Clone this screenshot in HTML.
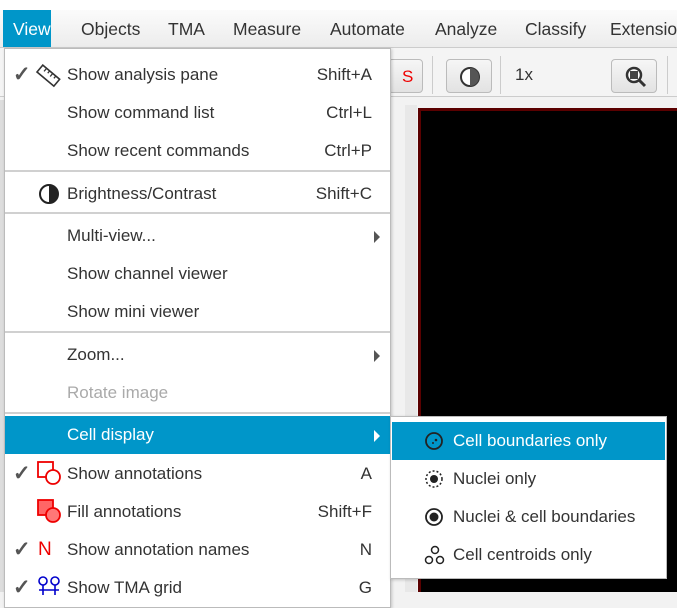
<!DOCTYPE html>
<html><head><meta charset="utf-8"><style>
*{margin:0;padding:0;box-sizing:border-box}
body{width:677px;height:592px;overflow:hidden;background:#f2f2f2;font-family:"Liberation Sans",sans-serif;position:relative;font-size:17px;color:#333}
.abs{position:absolute}
.mb{top:10px;left:0;width:677px;height:38px;background:linear-gradient(#fbfbfb,#ececec);border-bottom:1px solid #ccc}
.mb span{position:absolute;top:9px;font-size:17.5px;color:#333}
.tb{top:48px;left:0;width:677px;height:49px;background:#f4f4f4;border-bottom:1px solid #ccc}
.btn{position:absolute;top:11px;height:34px;border:1px solid #bbb;border-radius:4px;background:linear-gradient(#f6f6f6,#e2e2e2)}
.menu{left:4px;top:48px;width:387px;height:560px;background:#fff;border:1px solid #bbb;box-shadow:1px 1px 3px rgba(0,0,0,.2)}
.it{position:absolute;left:0;width:385px;height:38px}
.it .t{position:absolute;left:62px;top:9px}
.it .k{position:absolute;right:18px;top:9px}
.sep{position:absolute;left:0;width:385px;height:2px;background:#d0d0d0}
.chk{position:absolute;left:8px;top:6px;font-size:21px;color:#555;font-weight:bold}
.arr{position:absolute;right:10px;top:14px;width:0;height:0;border-left:6px solid #555;border-top:6px solid transparent;border-bottom:6px solid transparent}
.hl{background:#0096c9;color:#fff}
.sub{left:390px;top:416px;width:277px;height:163px;background:#fff;border:1px solid #bbb;box-shadow:1px 1px 3px rgba(0,0,0,.2)}
.si{position:absolute;left:1px;width:273px;height:38px}
.si .t{position:absolute;left:61px;top:9px}
.si svg{position:absolute;left:32px;top:9px}
</style></head><body>
<div class="abs" style="top:0;left:0;width:677px;height:10px;background:#fff"></div>
<div class="abs mb">
<div class="abs" style="left:3px;top:0;width:48px;height:37px;background:#0096c9"></div>
<span style="left:13px;color:#fff">View</span>
<span style="left:81px">Objects</span>
<span style="left:168px">TMA</span>
<span style="left:233px">Measure</span>
<span style="left:330px">Automate</span>
<span style="left:435px">Analyze</span>
<span style="left:525px">Classify</span>
<span style="left:610px">Extensions</span>
</div>
<div class="abs tb">
<div class="btn" style="left:388px;width:35px"><span style="position:absolute;left:13px;top:7px;color:#e00">S</span></div>
<div class="abs" style="left:432px;top:8px;width:1px;height:38px;background:#ccc"></div>
<div class="btn" style="left:446px;width:46px"><svg style="position:absolute;left:12px;top:6px" width="22" height="22"><circle cx="11" cy="11" r="9" fill="#fff" stroke="#333" stroke-width="2"/><path d="M11 2a9 9 0 0 1 0 18z" fill="#555"/></svg></div>
<div class="abs" style="left:500px;top:8px;width:1px;height:38px;background:#ccc"></div>
<span class="abs" style="left:515px;top:17px">1x</span>
<div class="btn" style="left:611px;width:46px"><svg style="position:absolute;left:12px;top:5px" width="24" height="24"><circle cx="10" cy="10" r="7" fill="#fff" stroke="#333" stroke-width="2.5"/><rect x="6" y="6" width="8" height="8" fill="#444"/><path d="M15 15l6 6" stroke="#333" stroke-width="3"/></svg></div>
<div class="abs" style="left:667px;top:8px;width:1px;height:38px;background:#ccc"></div>
</div>
<div class="abs" style="left:405px;top:105px;width:12px;height:487px;background:#e8e8e8"></div>
<div class="abs" style="left:418px;top:108px;width:259px;height:484px;background:#000;border-left:3px solid #5a0000;border-top:3px solid #5a0000"></div>
<div class="abs" style="left:0;top:100px;width:4px;height:492px;background:#ddd"></div>

<div class="abs menu">
<div class="it" style="top:7px"><span class="chk">✓</span><svg style="position:absolute;left:30px;top:8px" width="26" height="24"><g transform="rotate(40 13 12)"><rect x="2" y="7" width="22" height="9" fill="#fff" stroke="#333" stroke-width="1.6"/><path d="M7 7v4M11 7v3M15 7v4M19 7v3" stroke="#333" stroke-width="1.3"/></g></svg><span class="t">Show analysis pane</span><span class="k">Shift+A</span></div>
<div class="it" style="top:45px"><span class="t">Show command list</span><span class="k">Ctrl+L</span></div>
<div class="it" style="top:83px"><span class="t">Show recent commands</span><span class="k">Ctrl+P</span></div>
<div class="sep" style="top:121px"></div>
<div class="it" style="top:126px"><svg style="position:absolute;left:33px;top:8px" width="22" height="22"><circle cx="11" cy="11" r="9" fill="#fff" stroke="#222" stroke-width="2"/><path d="M11 2a9 9 0 0 1 0 18z" fill="#222"/></svg><span class="t">Brightness/Contrast</span><span class="k">Shift+C</span></div>
<div class="sep" style="top:163px"></div>
<div class="it" style="top:168px"><span class="t">Multi-view...</span><span class="arr"></span></div>
<div class="it" style="top:206px"><span class="t">Show channel viewer</span></div>
<div class="it" style="top:244px"><span class="t">Show mini viewer</span></div>
<div class="sep" style="top:282px"></div>
<div class="it" style="top:287px"><span class="t">Zoom...</span><span class="arr"></span></div>
<div class="it" style="top:325px;color:#aaa"><span class="t">Rotate image</span></div>
<div class="sep" style="top:363px"></div>
<div class="it hl" style="top:367px"><span class="t">Cell display</span><span class="arr" style="border-left-color:#fff"></span></div>
<div class="it" style="top:406px"><span class="chk">✓</span><svg style="position:absolute;left:31px;top:5px" width="26" height="28"><rect x="2" y="2" width="15" height="15" fill="none" stroke="#e00" stroke-width="1.8"/><circle cx="17" cy="17" r="7" fill="#fff" stroke="#e00" stroke-width="1.8"/></svg><span class="t">Show annotations</span><span class="k">A</span></div>
<div class="it" style="top:444px"><svg style="position:absolute;left:31px;top:5px" width="26" height="28"><rect x="2" y="2" width="15" height="15" fill="#f66" stroke="#e00" stroke-width="1.8"/><circle cx="17" cy="17" r="7" fill="#f77" stroke="#e00" stroke-width="1.8"/></svg><span class="t">Fill annotations</span><span class="k">Shift+F</span></div>
<div class="it" style="top:482px"><span class="chk">✓</span><span style="position:absolute;left:33px;top:8px;color:#e00;font-size:19px">N</span><span class="t">Show annotation names</span><span class="k">N</span></div>
<div class="it" style="top:520px"><span class="chk">✓</span><svg style="position:absolute;left:32px;top:6px" width="26" height="26"><circle cx="6" cy="6" r="4" fill="none" stroke="#00c" stroke-width="1.6"/><circle cx="18" cy="6" r="4" fill="none" stroke="#00c" stroke-width="1.6"/><path d="M6 10v10M18 10v10M2 15h20" stroke="#00c" stroke-width="1.6"/></svg><span class="t">Show TMA grid</span><span class="k">G</span></div>
</div>

<div class="abs sub">
<div class="si hl" style="top:5px"><svg width="20" height="20"><circle cx="10" cy="10" r="8" fill="none" stroke="#222" stroke-width="1.8"/><circle cx="12" cy="9" r="1.3" fill="#222"/><circle cx="9" cy="12" r="1" fill="#222"/></svg><span class="t">Cell boundaries only</span></div>
<div class="si" style="top:43px"><svg width="20" height="20"><circle cx="10" cy="10" r="8" fill="none" stroke="#222" stroke-width="1.5" stroke-dasharray="2 2"/><circle cx="10" cy="10" r="4" fill="#222"/></svg><span class="t">Nuclei only</span></div>
<div class="si" style="top:81px"><svg width="20" height="20"><circle cx="10" cy="10" r="8" fill="none" stroke="#222" stroke-width="1.8"/><circle cx="10" cy="10" r="4.5" fill="#222"/></svg><span class="t">Nuclei &amp; cell boundaries</span></div>
<div class="si" style="top:119px"><svg width="22" height="22"><circle cx="11" cy="5" r="3.5" fill="none" stroke="#222" stroke-width="1.5"/><circle cx="5" cy="15" r="3.5" fill="none" stroke="#222" stroke-width="1.5"/><circle cx="16" cy="15" r="3.5" fill="none" stroke="#222" stroke-width="1.5"/></svg><span class="t">Cell centroids only</span></div>
</div>
</body></html>
